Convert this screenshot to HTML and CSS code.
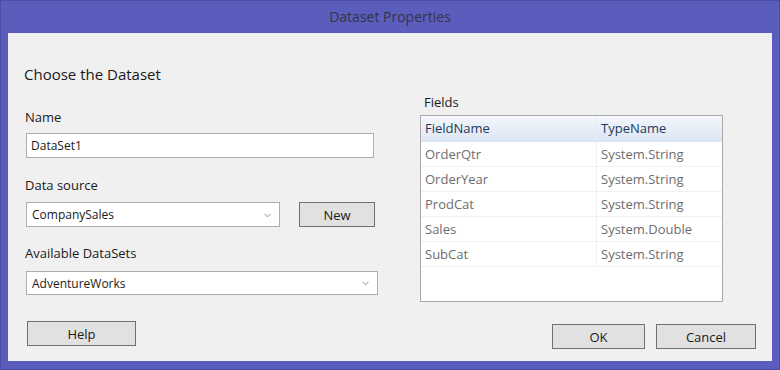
FILE: index.html
```html
<!DOCTYPE html>
<html lang="en">
<head>
  <meta charset="UTF-8">
  <meta name="viewport" content="width=device-width, initial-scale=1.0">
  <title>Dataset Properties</title>
  <link rel="stylesheet" href="styles.css">
</head>
<body>
  <div class="window">
    <!-- Barra de titulo -->
    <div class="titlebar">Dataset Properties</div>

    <div class="client">
      <h1 class="heading">Choose the Dataset</h1>

      <div class="columns">
        <!-- Columna izquierda: formulario -->
        <div class="left">
          <label class="label label-name">Name</label>
          <input class="textbox" type="text" value="DataSet1">

          <label class="label label-source">Data source</label>
          <div class="source-row">
            <div class="combo combo-source">
              <span>CompanySales</span>
              <svg class="chevron" width="7" height="5" viewBox="0 0 7 5"><path d="M0.5 0.8 L3.5 3.8 L6.5 0.8" fill="none" stroke="#8a8a8a" stroke-width="1"/></svg>
            </div>
            <button class="btn btn-new">New</button>
          </div>

          <label class="label label-sets">Available DataSets</label>
          <div class="combo combo-sets">
            <span>AdventureWorks</span>
            <svg class="chevron" width="7" height="5" viewBox="0 0 7 5"><path d="M0.5 0.8 L3.5 3.8 L6.5 0.8" fill="none" stroke="#8a8a8a" stroke-width="1"/></svg>
          </div>

          <button class="btn btn-help">Help</button>
        </div>

        <!-- Columna derecha: campos -->
        <div class="right">
          <label class="label label-fields">Fields</label>
          <div class="grid">
            <div class="grid-head">
              <div class="cell col-name">FieldName</div>
              <div class="cell col-type">TypeName</div>
            </div>
            <div class="grid-row">
              <div class="cell col-name">OrderQtr</div>
              <div class="cell col-type">System.String</div>
            </div>
            <div class="grid-row">
              <div class="cell col-name">OrderYear</div>
              <div class="cell col-type">System.String</div>
            </div>
            <div class="grid-row">
              <div class="cell col-name">ProdCat</div>
              <div class="cell col-type">System.String</div>
            </div>
            <div class="grid-row">
              <div class="cell col-name">Sales</div>
              <div class="cell col-type">System.Double</div>
            </div>
            <div class="grid-row">
              <div class="cell col-name">SubCat</div>
              <div class="cell col-type">System.String</div>
            </div>
          </div>

          <div class="actions">
            <button class="btn btn-ok">OK</button>
            <button class="btn btn-cancel">Cancel</button>
          </div>
        </div>
      </div>
    </div>
  </div>
</body>
</html>
```

FILE: styles.css
```css
/* Estilo general */
body {
  margin: 0;
  font-family: "Open Sans", "Noto Sans", sans-serif;
  color: #1a1a1a;
  overflow: hidden;
}

/* Ventana con marco morado */
.window {
  width: 780px;
  height: 370px;
  box-sizing: border-box;
  background: #5a5dbb;
  border: 1px solid #4b4ea6;
  display: flex;
  flex-direction: column;
}

.titlebar {
  height: 32px;
  line-height: 32px;
  text-align: center;
  font-size: 14px;
  color: #33334a;
}

/* Zona de contenido gris */
.client {
  background: #f0f0f0;
  margin: 0 7px 0 7px;
  height: 328px;
  box-sizing: border-box;
  padding: 31px 0 0 18px;
}

.heading {
  margin: 0 0 0 -2px;
  font-size: 15px;
  font-weight: 400;
  line-height: 20px;
  color: #1a1a1a;
}

.columns {
  display: flex;
  gap: 42px;
}

.left {
  width: 352px;
  display: flex;
  flex-direction: column;
  align-items: flex-start;
}

.right {
  width: 336px;
  display: flex;
  flex-direction: column;
  align-items: flex-start;
}

/* Etiquetas */
.label {
  display: block;
  font-size: 13px;
  line-height: 18px;
  color: #1a1a1a;
  margin-left: -1px;
}

.label-name { margin-top: 24px; }
.label-source { margin-top: 18px; }
.label-sets { margin-top: 17px; }
.label-fields { margin-top: 9px; margin-left: 4px; }

/* Caja de texto */
.textbox {
  margin: 7px 0 0 0;
  width: 348px;
  height: 25px;
  box-sizing: border-box;
  border: 1px solid #adadad;
  background: #fff;
  padding: 0 4px;
  font-family: inherit;
  font-size: 12px;
  color: #1a1a1a;
  outline: none;
}

/* Combos */
.source-row {
  display: flex;
  gap: 19px;
  margin-top: 8px;
}

.combo {
  height: 25px;
  box-sizing: border-box;
  border: 1px solid #adadad;
  background: #fff;
  display: flex;
  align-items: center;
  justify-content: space-between;
  padding: 0 8px 0 5px;
  font-size: 12px;
  color: #1a1a1a;
}

.combo-source { width: 254px; }

.combo-sets {
  width: 352px;
  height: 24px;
  margin-top: 9px;
}

.chevron { margin-top: 1px; }

/* Botones */
.btn {
  height: 25px;
  box-sizing: border-box;
  border: 1px solid #707070;
  background: #e1e1e1;
  font-family: inherit;
  font-size: 13px;
  color: #1a1a1a;
  padding: 0;
}

.btn-new { width: 76px; }

.btn-help {
  width: 109px;
  margin: 26px 0 0 1px;
}

.btn-ok { width: 93px; }
.btn-cancel { width: 100px; }

/* Tabla de campos */
.grid {
  margin-top: 4px;
  width: 303px;
  height: 187px;
  box-sizing: border-box;
  border: 1px solid #a9a9a9;
  background: #fff;
}

.grid-head {
  display: flex;
  height: 26px;
  background: linear-gradient(#f4f7fc, #dbe5f3);
  color: #1e395b;
}

.grid-row {
  display: flex;
  height: 25px;
  border-bottom: 1px solid #f0f0f0;
  box-sizing: border-box;
  color: #6d6d6d;
}

.cell {
  font-size: 13px;
  line-height: 25px;
  padding-left: 4px;
  box-sizing: border-box;
}

.col-name {
  width: 176px;
  border-right: 1px solid #f0f0f0;
}

.grid-head .col-name { border-right-color: #e6ecf5; }

.col-type { width: 125px; }

.actions {
  display: flex;
  gap: 11px;
  align-self: flex-end;
  margin-top: 22px;
}
```
